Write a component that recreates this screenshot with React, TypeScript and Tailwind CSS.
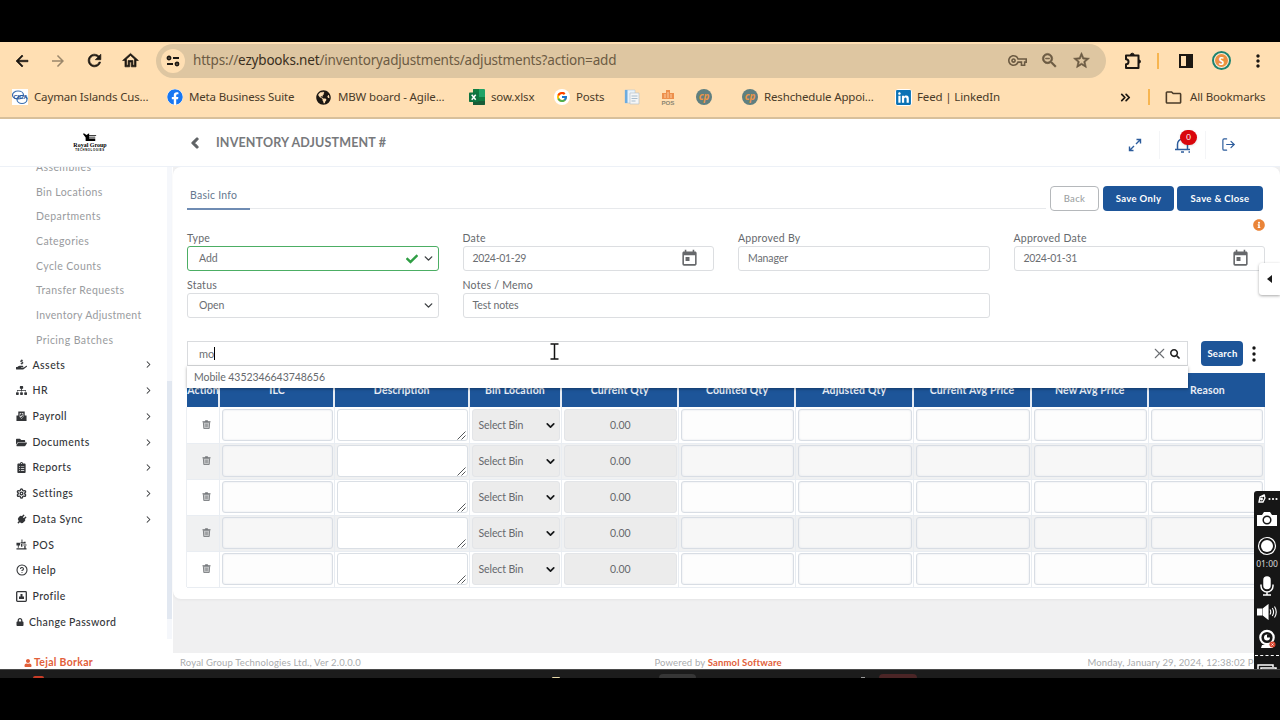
import type { ReactNode } from 'react';
import clsx from 'clsx';
import {
  FaCheck, FaChevronLeft, FaClipboardList, FaFacebook, FaFolderOpen, FaGlobeAmericas,
  FaHandHoldingUsd, FaInfoCircle, FaLinkedin, FaLock, FaSearch, FaSitemap, FaUser,
} from 'react-icons/fa';
import { FcGoogle } from 'react-icons/fc';
import {
  MdArrowBack, MdArrowForward, MdMoreVert, MdOutlineFolder, MdOutlineHome, MdOutlineVpnKey,
  MdRefresh, MdStarOutline, MdToday, MdZoomOut,
} from 'react-icons/md';
import { ChevronDown, ChevronRight, ChevronsRight, CircleHelp, LogOut, Plug, Settings, X } from 'lucide-react';

const subItems = [
  { label: 'Assemblies', tracking: 'tracking-[0.4px]' },
  { label: 'Bin Locations', tracking: 'tracking-[0.4px]' },
  { label: 'Departments', tracking: 'tracking-[0.4px]' },
  { label: 'Categories', tracking: 'tracking-[0.4px]' },
  { label: 'Cycle Counts', tracking: 'tracking-[0.4px]' },
  { label: 'Transfer Requests', tracking: 'tracking-[0.4px]' },
  { label: 'Inventory Adjustment', tracking: 'tracking-[0.3px]' },
  { label: 'Pricing Batches', tracking: 'tracking-[0.45px]' },
];

const PayrollIcon = () => (
  <svg viewBox="0 0 24 24" className="h-[11px] w-[11px]" fill="currentColor">
    <path d="M5 1h14v9h4v12H1V10h4zm3 4v8l4 4 4-4V5z" />
    <path d="M11 5h2v2h2v1.500h-4V10h4v4h-2v1h-2v-1H9v-1.500h4V11H9V7h2z" />
  </svg>
);

const PosIcon = () => (
  <svg viewBox="0 0 24 24" className="h-[11px] w-[11px]" fill="currentColor">
    <path d="M1 8h8v6H1zM4 14h2v5H4zM12 1h2v6h4v3h-8V7h2zM11 11h3v6h-3zM17 6h4v4h-4zM16 12h7v2h-7zM18 15h3v5h-3zM1 20h22v3H1z" />
  </svg>
);

const ProfileIcon = () => (
  <svg viewBox="0 0 11 11" className="h-[11px] w-[11px]" fill="none" stroke="currentColor" strokeWidth="1.300">
    <rect x="0.700" y="0.700" width="9.600" height="9.600" rx="0.800" />
    <path d="M4.500 3h2v2.500H8v2.500H3V5.500h1.500z" fill="currentColor" stroke="none" />
  </svg>
);

const mainItems: { label: string; icon: ReactNode; arrow?: boolean }[] = [
  { label: 'Assets', icon: <FaHandHoldingUsd size={11} />, arrow: true },
  { label: 'HR', icon: <FaSitemap size={11} />, arrow: true },
  { label: 'Payroll', icon: <PayrollIcon />, arrow: true },
  { label: 'Documents', icon: <FaFolderOpen size={11} />, arrow: true },
  { label: 'Reports', icon: <FaClipboardList size={11} />, arrow: true },
  { label: 'Settings', icon: <Settings size={11} strokeWidth={3} />, arrow: true },
  { label: 'Data Sync', icon: <Plug size={11} strokeWidth={3.2} className="rotate-45" fill="currentColor" />, arrow: true },
  { label: 'POS', icon: <PosIcon /> },
  { label: 'Help', icon: <CircleHelp size={12} strokeWidth={2.2} /> },
  { label: 'Profile', icon: <ProfileIcon /> },
];

const columns = [
  'Action', 'ILC', 'Description', 'Bin Location', 'Current Qty', 'Counted Qty',
  'Adjusted Qty', 'Current Avg Price', 'New Avg Price', 'Reason',
];

const tableGrid = 'grid grid-cols-[33px_115px_134.5px_92px_117.5px_117px_117.5px_118px_117.5px_116px]';

// Thickens a material glyph; its transparent bounding path must stay unstroked.
const boldGlyph = '[&_path:not([fill=none])]:stroke-[0.8px]';

function CicaIcon() {
  return (
    <svg viewBox="0 0 16 16" className="h-4 w-4 bg-white">
      <ellipse cx="6" cy="6" rx="5.500" ry="4" fill="none" stroke="#3b6fb0" strokeWidth="1.200" />
      <ellipse cx="10" cy="10.500" rx="5" ry="4" fill="none" stroke="#3b6fb0" strokeWidth="1.200" />
      <text x="1.500" y="10.300" fontSize="6" fontWeight="700" fill="#1f4f96" fontFamily="Liberation Sans">CICA</text>
    </svg>
  );
}

function ExcelIcon() {
  return (
    <svg viewBox="0 0 16 16" className="h-4 w-4">
      <path d="M4 0h11a1 1 0 0 1 1 1v14a1 1 0 0 1-1 1H4z" fill="#21a366" />
      <path d="M4 8h6V0H5a1 1 0 0 0-1 1zM4 8h12v4H4z" fill="#107c41" />
      <path d="M4 12h12v3a1 1 0 0 1-1 1H4z" fill="#185c37" />
      <rect y="3.500" width="9.500" height="9.500" rx="0.800" fill="#0f7340" />
      <path d="M2.700 5.700l4 5M6.700 5.700l-4 5" stroke="#fff" strokeWidth="1.500" />
    </svg>
  );
}

function DocIcon() {
  return (
    <svg viewBox="0 0 16 16" className="h-4 w-4">
      <path d="M1 1h10v13H1z" fill="#e9f2fa" stroke="#b7cbdc" strokeWidth="0.600" />
      <path d="M1 1h2.500v13H1z" fill="#6cabde" />
      <path d="M6 4h9v11H6z" fill="#f5f6f7" stroke="#b9c3ca" strokeWidth="0.700" />
      <path d="M7.500 7h6M7.500 9.500h6M7.500 12h4" stroke="#9fb5c7" strokeWidth="0.900" />
    </svg>
  );
}

function PosBookmark() {
  return (
    <svg viewBox="0 0 16 16" className="h-4 w-4">
      <path d="M6 1h4v3h4v6H2V4h4z" fill="#ed8f4b" />
      <path d="M5 5v4M8 3v6M11 5v4" stroke="#ffd3a8" strokeWidth="0.900" />
      <text x="1.500" y="15.500" fontSize="6.200" fontWeight="700" fill="#8c8672" fontFamily="Liberation Sans">POS</text>
    </svg>
  );
}

function CpIcon() {
  return (
    <span className="flex h-4 w-4 items-center justify-center rounded-full bg-[#5f7f80] pb-[2px] text-[10px] leading-none font-bold text-[#ec9547] italic">
      cp
    </span>
  );
}

function BrowserChrome() {
  return (
    <div className="h-[77px] shrink-0 border-b-2 border-[#d8c09b] bg-[#ffdfb3] font-['Noto_Sans','Open_Sans',sans-serif] text-[#4a3b28]">
      <div className="flex h-9 items-center pt-px text-[#1c1712]">
        <MdArrowBack size={18} className={clsx('ml-[13px]', boldGlyph)} />
        <MdArrowForward size={18} className="ml-[18px] text-[#9b876b]" />
        <MdRefresh size={19} className={clsx('ml-[18px]', boldGlyph)} />
        <MdOutlineHome size={19} className={clsx('ml-[17px]', boldGlyph)} />
        <div className="ml-4 flex h-[34px] w-[950px] items-center rounded-full bg-[#dec6a1] pl-[5px] text-[#6c5b43]">
          <span className="flex h-6 w-6 items-center justify-center rounded-full bg-[#ffdfb3]">
            <svg viewBox="0 0 14 14" className="h-[14px] w-[14px]" fill="none" stroke="#1c1712" strokeWidth="1.800">
              <circle cx="3" cy="4" r="1.500" />
              <path d="M7 4h6M1 10h6" />
              <circle cx="11" cy="10" r="1.500" />
            </svg>
          </span>
          <span className="ml-2 w-[424px] pt-px text-[13.5px] leading-none tracking-[-0.18px] whitespace-nowrap">
            https://<span className="text-[#3a2f20]">ezybooks.net</span>/inventoryadjustments/adjustments?action=add
          </span>
          <MdOutlineVpnKey size={19} className="ml-[391px]" />
          <MdZoomOut size={19} className={clsx('ml-[13px]', boldGlyph)} />
          <MdStarOutline size={19} className={clsx('ml-[13px]', boldGlyph)} />
        </div>
        <svg viewBox="0 0 18 18" className="ml-[18px] h-[18px] w-[18px]" fill="none" stroke="currentColor" strokeWidth="2" strokeLinejoin="round">
          <path d="M2 3.500h12.500v12.500H2v-3.700a2.500 2.500 0 0 0 0-5z" />
          <path d="M6.500 3a1.800 1.800 0 0 1 3.600 0zM15 8a1.500 1.500 0 0 1 0 3z" fill="currentColor" strokeWidth="1" />
        </svg>
        <span className="ml-[15px] h-4 w-[2px] bg-[#f7b550]" />
        <svg viewBox="0 0 16 16" className="ml-[19px] h-4 w-4" fill="none" stroke="currentColor" strokeWidth="2">
          <path d="M2 2h12v12H2z" />
          <path d="M9 2h5v12H9z" fill="currentColor" />
        </svg>
        <span className="ml-[18px] flex h-[19px] w-[19px] items-center justify-center rounded-full border-2 border-[#1e8370] bg-[#fff0dc]">
          <span className="flex h-[13px] w-[13px] items-center justify-center rounded-full bg-[#ec9142] text-[10px] leading-none font-bold text-white">S</span>
        </span>
        <MdMoreVert size={20} className="ml-[17px]" />
      </div>
      <div className="flex h-[38px] items-center text-[11.5px] leading-none tracking-[-0.15px] whitespace-nowrap">
        <span className="ml-3 flex w-[155px] items-center gap-[6px]"><CicaIcon />Cayman Islands Cus...</span>
        <span className="flex w-[149px] items-center gap-[6px]"><FaFacebook size={16} className="rounded-full bg-white text-[#1877f2]" />Meta Business Suite</span>
        <span className="flex w-[153px] items-center gap-[7px]"><FaGlobeAmericas size={15} className="text-[#1c1712]" />MBW board - Agile...</span>
        <span className="flex w-[85px] items-center gap-[6px]"><ExcelIcon />sow.xlsx</span>
        <span className="flex w-[70px] items-center gap-[6px]">
          <span className="rounded-full bg-white p-[2px]"><FcGoogle size={12} /></span>Posts
        </span>
        <span className="flex w-[36px]"><DocIcon /></span>
        <span className="flex w-[36px]"><PosBookmark /></span>
        <span className="flex w-[46px]"><CpIcon /></span>
        <span className="flex w-[153px] items-center gap-[6px]"><CpIcon />Reshchedule Appoi...</span>
        <span className="flex w-[223px] items-center gap-[5px]"><FaLinkedin size={17} className="rounded-sm bg-white text-[#0a72b5]" />Feed | LinkedIn</span>
        <ChevronsRight size={15} strokeWidth={2.8} className="text-[#1c1712]" />
        <span className="ml-[15px] h-4 w-[2px] bg-[#f7b550]" />
        <MdOutlineFolder size={19} className="ml-[14px]" />
        <span className="ml-[7px]">All Bookmarks</span>
      </div>
    </div>
  );
}

function AppHeader() {
  return (
    <header className="flex h-12 shrink-0 items-center border-b border-[#edf1f7] bg-white text-[#2c5c9c]">
      <div className="ml-[73px] flex w-[34px] flex-col items-center font-['Liberation_Serif',serif] text-black">
        <svg viewBox="0 0 16 10" className="h-[9px] w-[14px]">
          <path d="M1 0l3 2 3-2v2h8v1H7v1h7v1H7v1h7v3H3V5L0 1z" />
        </svg>
        <span className="text-[6px] leading-[6px] font-bold whitespace-nowrap">Royal Group</span>
        <span className="font-['Liberation_Sans'] text-[2.8px] leading-[4px] font-bold tracking-[0.6px]">TECHNOLOGIES</span>
      </div>
      <FaChevronLeft size={12} strokeWidth={50} className="ml-[82px] text-[#5f6265]" />
      <h1 className="mt-[2px] ml-[15px] text-[12.5px] leading-none font-bold tracking-[0.15px] whitespace-nowrap text-[#77797c]">INVENTORY ADJUSTMENT #</h1>
      <div className="mt-1 ml-auto flex h-9 items-center">
        <svg viewBox="0 0 14 14" className="mr-[17px] h-[14px] w-[14px]" fill="none" stroke="currentColor" strokeWidth="1.400">
          <path d="M8.500 1.500h4v4M12.500 1.500L8 6M5.500 12.500h-4v-4M1.500 12.500L6 8" />
        </svg>
        <div className="relative flex h-7 w-[47px] items-center justify-center border-x border-[#f4f5f7]">
          <svg viewBox="0 0 18 16" className="h-4 w-[18px]" fill="none" stroke="currentColor" strokeWidth="1.500">
            <path d="M1 12.500h15M3.500 12V7.500A5 5 0 0 1 8.500 2a5 5 0 0 1 5 5.500V12M7 15h3M14.500 15h1.500" />
          </svg>
          <span className="absolute top-[-1px] left-[20px] flex h-[15px] w-[17px] items-center justify-center rounded-full bg-[#d9060c] text-[8px] text-white shadow">0</span>
        </div>
        <LogOut size={15} strokeWidth={1.900} className="mr-[44px] ml-[15px]" />
      </div>
    </header>
  );
}

function Sidebar() {
  return (
    <aside className="flex w-[173px] shrink-0 overflow-hidden bg-white">
      <nav className="w-[167px] text-[10.5px] leading-none">
        <div className="-mt-3">
          {subItems.map((item) => (
            <div key={item.label} className={clsx('flex h-[24.65px] items-center pl-9 whitespace-nowrap text-[#999b9e]', item.tracking)}>
              {item.label}
            </div>
          ))}
        </div>
        {mainItems.map((item) => (
          <div key={item.label} className="flex h-[25.7px] items-center pr-[13px] pl-4 text-[#333538]">
            <span className="flex w-[16.500px] items-center">{item.icon}</span>
            <span className="flex-1 font-medium tracking-[0.450px]">{item.label}</span>
            {item.arrow && <ChevronRight size={11} strokeWidth={2.200} />}
          </div>
        ))}
        <div className="flex h-[25.7px] items-center gap-[5px] pl-4 font-medium tracking-[0.350px] text-[#333538]">
          <FaLock size={8} />Change Password
        </div>
      </nav>
      <div className="mb-[14px] flex w-[5px] flex-col justify-end bg-[#f5f7fb] pb-[20px]">
        <div className="h-[238px] bg-[#e2e8f1]" />
      </div>
    </aside>
  );
}

function Field({ label, className, children }: { label: string; className?: string; children: ReactNode }) {
  return (
    <div className={className}>
      <div className="flex h-[14px] items-center text-[10.5px] leading-none tracking-[0.250px] text-[#66696d]">{label}</div>
      {children}
    </div>
  );
}

function Box({ className, children }: { className?: string; children: ReactNode }) {
  return (
    <div className={clsx('mt-px flex h-[25px] items-center rounded-[3px] border text-[10.5px] leading-none tracking-[-0.1px] text-[#6b6e72]', className)}>
      {children}
    </div>
  );
}

function Form() {
  return (
    <div className="mt-5 grid grid-cols-4 gap-x-6 gap-y-[7px]">
      <Field label="Type">
        <Box className="border-[#4cae64] pr-[3px] pl-[11px]">
          <span className="flex-1">Add</span>
          <FaCheck size={12} className="mr-[4px] text-[#2f9e44]" />
          <ChevronDown size={13} strokeWidth={2.600} className="text-[#3d4043]" />
        </Box>
      </Field>
      <Field label="Date">
        <Box className="border-[#dcdee1] pr-[14px] pl-[9px]">
          <span className="flex-1 tracking-[-0.300px]">2024-01-29</span>
          <MdToday size={19} className="text-[#66686b]" />
        </Box>
      </Field>
      <Field label="Approved By">
        <Box className="border-[#dcdee1] pl-[9px]">Manager</Box>
      </Field>
      <Field label="Approved Date">
        <Box className="border-[#dcdee1] pr-[14px] pl-[9px]">
          <span className="flex-1 tracking-[-0.300px]">2024-01-31</span>
          <MdToday size={19} className="text-[#66686b]" />
        </Box>
      </Field>
      <Field label="Status">
        <Box className="border-[#dcdee1] pr-[3px] pl-[11px]">
          <span className="flex-1">Open</span>
          <ChevronDown size={13} strokeWidth={2.600} className="text-[#3d4043]" />
        </Box>
      </Field>
      <Field label="Notes / Memo" className="col-span-2">
        <Box className="border-[#dcdee1] pl-[9px]">Test notes</Box>
      </Field>
    </div>
  );
}

function TrashIcon() {
  return (
    <svg viewBox="0 0 10 10" className="mr-[-6px] mb-px h-[9px] w-[9px]" fill="none" stroke="#777a7d">
      <path d="M0.500 2h9M3.500 1h3" strokeWidth="1.200" />
      <path d="M1.500 2.500l0.500 7h6l0.500-7z" fill="#c9cbcd" />
      <path d="M3.700 4v4M5 4v4M6.300 4v4" strokeWidth="0.600" />
    </svg>
  );
}

function ItemRow({ striped }: { striped: boolean }) {
  const cell = 'border-r border-b border-[#e9edf2] py-[2px] pr-[1px] pl-[2px]';
  const input = clsx(
    'h-[32px] rounded-[3px] border border-[#d8dde4] shadow-[inset_0_0_2px_#dfe4ea]',
    striped ? 'bg-[#f7f7f7]' : 'bg-[#fdfdfd]',
  );
  return (
    <div className={clsx(tableGrid, 'h-9', striped ? 'bg-[#f0f1f2]' : 'bg-white')}>
      <div className="flex items-center justify-center border-r border-b border-[#e9edf2]"><TrashIcon /></div>
      <div className={cell}><div className={input} /></div>
      <div className={cell}>
        <div className="flex h-8 items-end justify-end rounded-[3px] border border-[#dadfe5] bg-white pr-px">
          <svg viewBox="0 0 9 9" className="h-[9px] w-[9px]" stroke="#55585b" strokeWidth="1">
            <path d="M0.500 8.500l8-8M4.500 8.500l4-4" />
          </svg>
        </div>
      </div>
      <div className={cell}>
        <div className="flex h-8 items-center justify-between rounded-[3px] border border-[#e3e5e8] bg-[#ececec] pr-[2px] pl-[6px] text-[10.5px] leading-none tracking-[-0.1px] text-[#66696d]">
          Select Bin
          <ChevronDown size={13} strokeWidth={3.200} className="text-[#17191b]" />
        </div>
      </div>
      <div className={cell}>
        <div className="flex h-8 items-center justify-center rounded-[3px] border border-[#e3e5e8] bg-[#ececec] text-[10.5px] leading-none text-[#66696d]">0.00</div>
      </div>
      {columns.slice(5).map((name) => (
        <div key={name} className={cell}><div className={input} /></div>
      ))}
    </div>
  );
}

function SearchBar() {
  return (
    <div className="mt-[23px] flex items-center">
      <div className="relative h-[25px] w-[1001px]">
        <div className="flex h-[25px] items-center border border-[#d9dbde] pr-[6px] pl-[11px] text-[11px] leading-none text-[#6b6e72]">
          <span className="mb-px border-r border-black py-px">mo</span>
          <X size={17} strokeWidth={1.500} className="mr-[2px] ml-auto" />
          <FaSearch size={10} className="mr-px text-[#222]" />
        </div>
        <div className="absolute top-[25px] left-0 z-10 flex h-[22px] w-full items-center bg-white pl-[7px] text-[10.5px] leading-none tracking-[-0.050px] text-[#66696d] shadow-[0_1px_3px_rgba(0,0,0,0.35)]">
          Mobile 4352346643748656
        </div>
      </div>
      <div className="ml-[13px] flex h-[25px] w-[42px] items-center justify-center rounded-[4px] bg-[#1d5599] pl-px text-[9.5px] leading-none font-bold tracking-[0.300px] text-white">Search</div>
      <svg viewBox="0 0 4 16" className="ml-[9px] h-4 w-1" fill="#151515">
        <circle cx="2" cy="2" r="1.700" />
        <circle cx="2" cy="8" r="1.700" />
        <circle cx="2" cy="14" r="1.700" />
      </svg>
    </div>
  );
}

function Content() {
  return (
    <main className="flex-1 bg-[#f0f0f1]">
      <section className="h-[432px] rounded-lg bg-white pt-[19px] pl-[14px] shadow-[0_1px_3px_rgba(0,0,0,0.05)]">
        <div className="w-[1078px]">
          <div className="flex h-[25px]">
            <div className="h-[23.500px] w-[63px] border-b-2 border-[#6f8cb3] pt-[4px] pl-[3px] text-[10.5px] leading-none tracking-[0.250px] whitespace-nowrap text-[#66788f]">
              Basic Info
            </div>
            <div className="mb-[2px] w-[796px] border-b border-[#e7e9ec]" />
            <div className="ml-[4px] flex gap-[4px] text-[9.5px] leading-none font-bold tracking-[0.350px] text-white">
              <div className="flex w-[49px] items-center justify-center rounded-[4px] border border-[#b5b8bb] font-medium text-[#9c9fa2]">Back</div>
              <div className="flex w-[71px] items-center justify-center rounded-[4px] bg-[#1d5599]">Save Only</div>
              <div className="-ml-px flex w-[86px] items-center justify-center rounded-[4px] bg-[#1d5599]">Save &amp; Close</div>
            </div>
          </div>
          <div className="mt-2 -mb-[21px] flex h-3 justify-end"><FaInfoCircle size={12} className="text-[#ea8438]" /></div>
          <div className="pt-[1px]"><Form /></div>
          <SearchBar />
          <div className="mt-[7px]">
            <div className={clsx(tableGrid, 'h-[34px] bg-[#1d5599]')}>
              {columns.map((name) => (
                <div key={name} className="flex items-center justify-center overflow-hidden border-r-2 border-[#e6ecf4] pl-px text-[10.5px] leading-none font-bold tracking-[0.150px] whitespace-nowrap text-[#e8edf5] last:border-r-0">
                  {name}
                </div>
              ))}
            </div>
            <div className="-ml-px border-l border-[#eceff3]">
              {[0, 1, 2, 3, 4].map((i) => <ItemRow key={i} striped={i % 2 === 1} />)}
            </div>
          </div>
        </div>
      </section>
    </main>
  );
}

function Recorder() {
  return (
    <div className="absolute top-[491px] right-0 flex h-[178px] w-[26px] flex-col items-center overflow-hidden rounded-tl-[3px] bg-[#161616] text-white">
      <svg viewBox="0 0 26 16" className="h-4 w-[26px] shrink-0">
        <path d="M5 11l1-5 4-2 1 3-2 4z M8 6l3-2" fill="none" stroke="#fff" strokeWidth="1.300" />
        <circle cx="7.500" cy="8" r="1.500" fill="#fff" />
        <circle cx="15.500" cy="8" r="1.100" fill="#fff" />
        <circle cx="19" cy="8" r="1.100" fill="#fff" />
        <circle cx="22.500" cy="8" r="1.100" fill="#fff" />
      </svg>
      <svg viewBox="0 0 20 16" className="mt-1 h-4 w-5 shrink-0">
        <path d="M0 4h5l2-3h6l2 3h5v11H0z" fill="#fff" />
        <circle cx="10" cy="9" r="3.800" fill="#fff" stroke="#161616" strokeWidth="1.500" />
      </svg>
      <svg viewBox="0 0 20 20" className="mt-[9px] h-5 w-5 shrink-0">
        <circle cx="10" cy="10" r="8.500" fill="none" stroke="#fff" strokeWidth="1.200" />
        <circle cx="10" cy="10" r="6" fill="#fff" />
      </svg>
      <span className="mt-[3px] font-['Noto_Sans',sans-serif] text-[8.500px] leading-[9px] text-[#d8d8d8]">01:00</span>
      <svg viewBox="0 0 16 20" className="mt-[8px] h-5 w-4 shrink-0" fill="none" stroke="#fff" strokeWidth="1.500">
        <rect x="5" y="1" width="6" height="11.500" rx="3" fill="#fff" />
        <path d="M2 8.500v1.500a6 6 0 0 0 12 0V8.500M8 16v3M4 19h8" />
      </svg>
      <svg viewBox="0 0 20 16" className="mt-[8px] h-4 w-5 shrink-0" fill="none" stroke="#fff" strokeWidth="1.100">
        <path d="M0.500 5h4v6h-4z" fill="#fff" />
        <path d="M6 5l5-4v14l-5-4z" fill="#fff" />
        <path d="M13 5.500q1.500 2.500 0 5M15.300 4q2.500 4 0 8M17.500 2.500q3.500 5.500 0 11" />
      </svg>
      <svg viewBox="0 0 20 20" className="mt-[9px] h-5 w-5 shrink-0">
        <circle cx="10" cy="8.500" r="6.700" fill="#161616" stroke="#fff" strokeWidth="2.200" />
        <circle cx="10" cy="8.500" r="3" fill="#fff" />
        <path d="M10 8.500V5.500h3v3z" fill="#161616" />
        <path d="M5 16h10l1 3H4z" fill="#fff" />
        <circle cx="15.500" cy="15.500" r="3" fill="#d9452f" />
        <path d="M14.500 14.500l2 2M16.500 14.500l-2 2" stroke="#fff" strokeWidth="0.800" />
      </svg>
      <div className="mt-[6px] w-6 shrink-0 border-t border-dashed border-white" />
      <svg viewBox="0 0 20 8" className="mt-[8px] h-2 w-5 shrink-0" fill="none" stroke="#fff" strokeWidth="1.500">
        <path d="M1 6V1h15v2M4 8V4h15v4" />
      </svg>
    </div>
  );
}

function Footer() {
  return (
    <footer className="flex h-4 shrink-0 items-center overflow-hidden bg-white pt-[3px] text-[9.5px] leading-none tracking-[0.150px] whitespace-nowrap text-[#aaacae]">
      <div className="flex w-[180px] items-center gap-[2px] pl-6 text-[10.5px] font-bold tracking-[0.300px] text-[#e2603a]">
        <FaUser size={8} />Tejal Borkar
      </div>
      <div className="w-[474.5px]">Royal Group Technologies Ltd., Ver 2.0.0.0</div>
      <div className="w-[433px]">Powered by <span className="font-bold text-[#e2603a]">Sanmol Software</span></div>
      <div>Monday, January 29, 2024, 12:38:02 PM</div>
    </footer>
  );
}

export default function App() {
  return (
    <div className="relative flex h-[720px] w-[1280px] flex-col overflow-hidden bg-black pt-[42px] font-[Lato,sans-serif]">
      <BrowserChrome />
      <AppHeader />
      <div className="flex h-[486px] shrink-0 overflow-hidden">
        <Sidebar />
        <Content />
      </div>
      <Footer />
      <div className="flex h-[9px] shrink-0 items-end border-t border-[#4a4a4a] bg-[#1c1c1c]">
        <span className="ml-[33px] h-[2px] w-[11px] rounded-t-full bg-[#c83c26]" />
        <span className="ml-[508px] h-px w-2 rounded-t-full bg-[#e8d9a8]" />
        <span className="ml-[99px] h-[4px] w-[37px] rounded-t bg-[#363636]" />
        <span className="ml-[165px] h-px w-1 bg-[#9a9a9a]" />
        <span className="ml-[14px] h-[4px] w-[38px] rounded-t bg-[#4b2526]" />
      </div>

      <div className="absolute top-[263px] right-0 flex h-8 w-[21px] items-center justify-center rounded-l-[3px] bg-white shadow-[0_1px_3px_rgba(0,0,0,0.35)]">
        <svg viewBox="0 0 5 8" className="h-2 w-[5px]"><path d="M5 0v8L0 4z" fill="#1b1b1b" /></svg>
      </div>
      <Recorder />
      <svg viewBox="0 0 9 17" className="absolute top-[343px] left-[550px] h-[17px] w-[9px]" fill="none" stroke="#111" strokeWidth="1.500">
        <path d="M0.500 1H4l0.500 0.500L5 1h3.500M4.500 1.500v14M0.500 16H4l0.500-0.500L5 16h3.500" />
      </svg>
    </div>
  );
}
